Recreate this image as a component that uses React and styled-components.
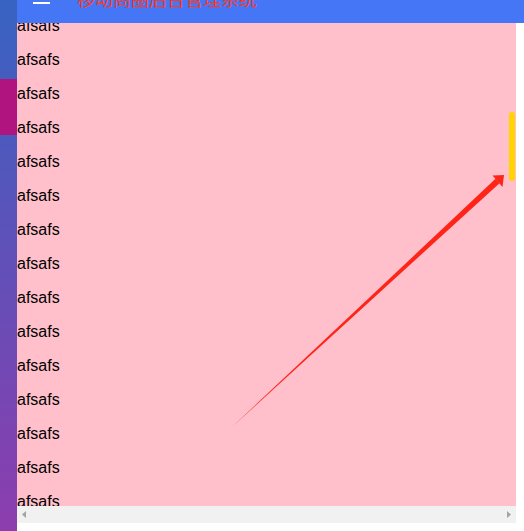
import React from "react";
import styled, { createGlobalStyle } from "styled-components";

const colors = {
  header: "#4476f6",
  pink: "#ffc0cb",
  thumb: "#ffd400",
  active: "#b0147f",
  track: "#f1f1f1",
  arrow: "#a3a3a3",
};

const GlobalStyle = createGlobalStyle`
  html, body {
    margin: 0;
    padding: 0;
    height: 100%;
    overflow: hidden;
    background: #fff;
  }
  body {
    font-family: "Liberation Sans", Arial, sans-serif;
  }
`;

const Layout = styled.div`
  position: relative;
  display: flex;
  width: 524px;
  height: 531px;
`;

const Sidebar = styled.aside`
  width: 17px;
  flex-shrink: 0;
  display: flex;
  flex-direction: column;
  background: linear-gradient(180deg, #3763c2 0%, #8d3dae 100%);
`;

const MenuItem = styled.div`
  height: 56px;
  background: ${(p) => (p.$active ? colors.active : "transparent")};
  &:first-child {
    margin-top: 79px;
  }
`;

const Main = styled.main`
  flex: 1;
  display: flex;
  flex-direction: column;
  min-width: 0;
`;

const Header = styled.header`
  height: 23px;
  flex-shrink: 0;
  display: flex;
  align-items: flex-end;
  padding-left: 16px;
  background: ${colors.header};
  overflow: hidden;
`;

const Hamburger = styled.div`
  width: 17px;
  display: flex;
  flex-direction: column;
  gap: 5px;
  margin-bottom: 19px;
  margin-right: 27px;

  span {
    display: block;
    height: 2px;
    background: #fff;
  }
`;

const Title = styled.h1`
  margin: 0 0 14px;
  font-size: 18px;
  line-height: 18px;
  font-weight: 400;
  color: #fa3a22;
  white-space: nowrap;
  font-family: "Liberation Sans", "Noto Sans CJK SC", sans-serif;
`;

const Content = styled.section`
  flex: 1;
  display: flex;
  flex-direction: column;
  margin: 0 8px 8px 0;
  min-height: 0;
`;

const Viewport = styled.div`
  position: relative;
  flex: 1;
  overflow: hidden;
  background: ${colors.pink};
`;

const List = styled.div`
  display: flex;
  flex-direction: column;
  gap: 16px;
  margin-top: -6.5px;
`;

const Row = styled.p`
  margin: 0;
  font-size: 16px;
  line-height: 18px;
  color: #000;
`;

const Thumb = styled.div`
  position: absolute;
  right: 1px;
  top: 89px;
  width: 6px;
  height: 69px;
  border-radius: 3px;
  background: ${colors.thumb};
`;

const HScroll = styled.div`
  height: 17px;
  flex-shrink: 0;
  display: flex;
  align-items: center;
  justify-content: space-between;
  padding: 0 5px;
  background: ${colors.track};

  svg {
    display: block;
  }
`;

const Overlay = styled.svg`
  position: absolute;
  inset: 0;
  pointer-events: none;
`;

const rows = Array.from({ length: 18 }, (_, i) => i);

export default function App() {
  return (
    <>
      <GlobalStyle />
      <Layout>
        <Sidebar>
          <MenuItem $active />
        </Sidebar>
        <Main>
          <Header>
            <Hamburger>
              <span />
              <span />
              <span />
            </Hamburger>
            <Title>移动商圈后台管理系统</Title>
          </Header>
          <Content>
            <Viewport>
              <List>
                {rows.map((i) => (
                  <Row key={i}>afsafs</Row>
                ))}
              </List>
              <Thumb />
            </Viewport>
            <HScroll>
              <svg width="4" height="7" viewBox="0 0 4 7">
                <polygon points="4,0 0,3.5 4,7" fill={colors.arrow} />
              </svg>
              <svg width="4" height="7" viewBox="0 0 4 7">
                <polygon points="0,0 4,3.5 0,7" fill={colors.arrow} />
              </svg>
            </HScroll>
          </Content>
        </Main>
        <Overlay width="524" height="531" viewBox="0 0 524 531">
          <polygon
            points="232,427 499.5,183.2 495.5,178.8"
            fill="#fe2418"
          />
          <polygon points="504,175 492.5,175.5 502.5,187" fill="#fe2418" />
        </Overlay>
      </Layout>
    </>
  );
}
